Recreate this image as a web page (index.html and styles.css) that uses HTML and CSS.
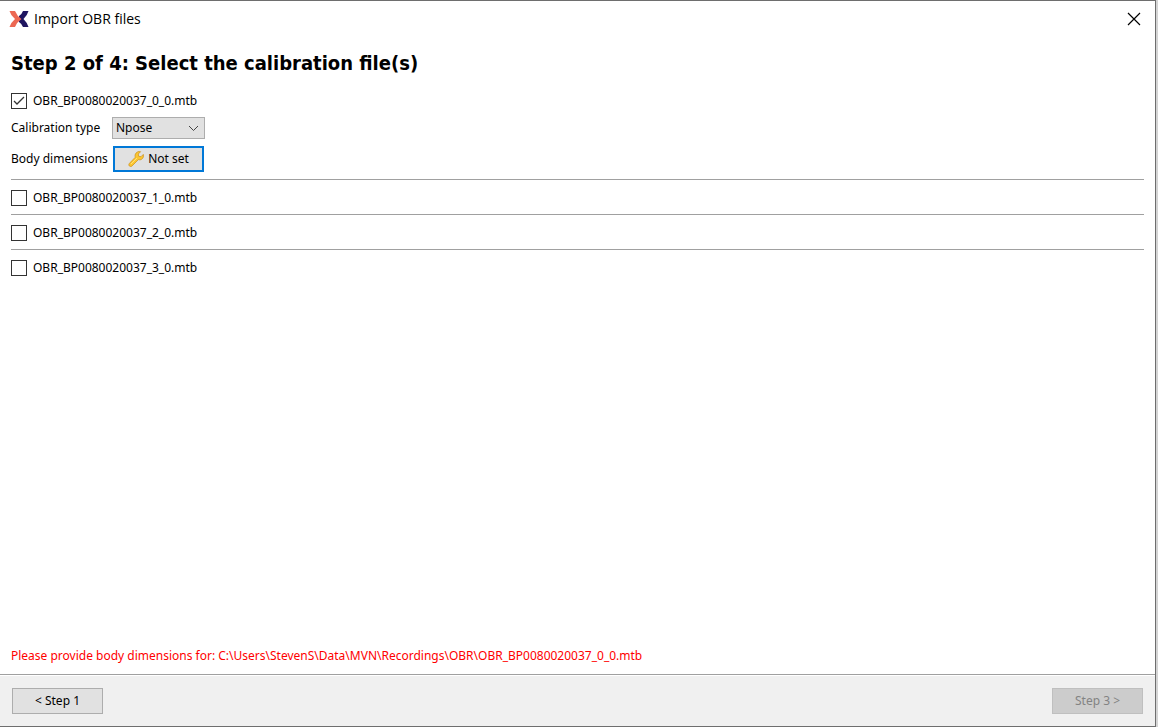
FILE: index.html
```html
<!DOCTYPE html>
<html lang="en">
<head>
    <meta charset="UTF-8">
    <meta name="viewport" content="width=device-width, initial-scale=1.0">
    <title>Import OBR files</title>
    <link rel="stylesheet" href="styles.css">
</head>
<body>
    <div class="dialog">
        <header class="titlebar">
            <svg class="logo" width="20" height="18" viewBox="0 0 20 18" aria-hidden="true">
                <path fill="#1f1560" d="M14 1h5.500q-1 4-5 8q4 4 5 8H14q-1-3-4-5V6q3-2 4-5z"/>
                <path fill="#ec6853" d="M.5 1H6q2 5 6.500 8q-4.500 3-6.500 8H.5q1-4 5.500-8Q1.500 5 .5 1z"/>
            </svg>
            <span class="title">Import OBR files</span>
            <button type="button" class="close" aria-label="Close">
                <svg width="14" height="14" viewBox="0 0 14 14" aria-hidden="true">
                    <path fill="none" stroke="#000" stroke-width="1.2" d="M1 1l12 12M13 1L1 13"/>
                </svg>
            </button>
        </header>

        <main class="content">
            <h1>Step 2 of 4: Select the calibration file(s)</h1>

            <div class="file">
                <div class="check-row">
                    <input type="checkbox" id="file-0" checked>
                    <label for="file-0">OBR_BP0080020037_0_0.mtb</label>
                </div>
                <div class="options">
                    <label for="calibration-type">Calibration type</label>
                    <div class="select">
                        <select id="calibration-type">
                            <option>Npose</option>
                            <option>Tpose</option>
                        </select>
                        <svg class="arrow" width="11" height="7" viewBox="0 0 11 7" aria-hidden="true">
                            <path fill="none" stroke="#444" d="M1 1l4.500 4.500L10 1"/>
                        </svg>
                    </div>
                    <label for="body-dimensions">Body dimensions</label>
                    <button type="button" id="body-dimensions" class="button focused">
                        <svg width="16" height="16" viewBox="0 0 16 16" aria-hidden="true">
                            <path fill="#fcc62f" stroke="#c98e1c" stroke-width=".7" stroke-linejoin="round" d="M12.600 .7L10.300 3l.4 2.300 2.300.4 2.300-2.300c.5 2.200-.2 4-1.700 4.900-1.100.7-2.300.6-3.200.3L4.100 14.900c-.8.8-2 .8-2.700.1-.8-.8-.7-1.900.1-2.700L7.300 6.200C6.800 5 7 3.300 8 2.100 9.200.7 11 .2 12.600.7z"/>
                            <path fill="none" stroke="#ffe078" d="M3 13l6-6"/>
                        </svg>
                        Not set
                    </button>
                </div>
            </div>
            <div class="file">
                <div class="check-row">
                    <input type="checkbox" id="file-1">
                    <label for="file-1">OBR_BP0080020037_1_0.mtb</label>
                </div>
            </div>
            <div class="file">
                <div class="check-row">
                    <input type="checkbox" id="file-2">
                    <label for="file-2">OBR_BP0080020037_2_0.mtb</label>
                </div>
            </div>
            <div class="file">
                <div class="check-row">
                    <input type="checkbox" id="file-3">
                    <label for="file-3">OBR_BP0080020037_3_0.mtb</label>
                </div>
            </div>

            <p class="error">Please provide body dimensions for: C:\Users\StevenS\Data\MVN\Recordings\OBR\OBR_BP0080020037_0_0.mtb</p>
        </main>

        <footer>
            <button type="button" class="button">&lt; Step 1</button>
            <button type="button" class="button" disabled>Step 3 &gt;</button>
        </footer>
    </div>
</body>
</html>
```

FILE: styles.css
```css
* {
    box-sizing: border-box;
}

body {
    margin: 0;
    padding-right: 2px;
    background-color: #d4d4d4;
    color: #000;
    font-family: "Noto Sans", sans-serif;
    font-size: 12px;
    line-height: 16px;
}

.dialog {
    display: flex;
    flex-direction: column;
    min-height: 100vh;
    background-color: #fff;
    border: 1px solid #6e6e6e;
    border-left: none;
}

.titlebar {
    display: flex;
    align-items: center;
    height: 36px;
    padding: 0 14px 0 9px;
    gap: 5px;
}

.title {
    flex: 1;
    font-family: "Open Sans", sans-serif;
    font-size: 14px;
}

.close {
    display: flex;
    padding: 0;
    border: none;
    background: none;
}

.content {
    display: flex;
    flex-direction: column;
    flex: 1;
    padding: 12px 11px 10px;
}

h1 {
    margin: 0 0 11px;
    font-family: "DejaVu Sans Condensed", "DejaVu Sans", sans-serif;
    font-size: 20px;
    line-height: 28px;
}

.file {
    padding: 5px 0 7px;
}

.file + .file {
    padding: 10px 0 8px;
    border-top: 1px solid #a0a0a0;
}

.check-row {
    display: flex;
    align-items: center;
    gap: 6px;
}

input[type="checkbox"] {
    appearance: none;
    width: 16px;
    height: 16px;
    margin: 0;
    border: 1px solid #333;
    background-color: #fff;
}

input[type="checkbox"]:checked {
    background-image: url("data:image/svg+xml,%3Csvg xmlns='http://www.w3.org/2000/svg' viewBox='0 0 14 14'%3E%3Cpath fill='none' stroke='%23333' stroke-width='1.3' d='M2 7l3 3 7-7'/%3E%3C/svg%3E");
}

.options {
    display: grid;
    grid-template-columns: 95px 93px;
    align-items: center;
    gap: 7px 6px;
    margin-top: 8px;
    white-space: nowrap;
}

.select {
    display: grid;
    align-items: center;
}

.select select,
.select .arrow {
    grid-area: 1 / 1;
}

.select .arrow {
    justify-self: end;
    margin-right: 6px;
    pointer-events: none;
}

select {
    appearance: none;
    height: 22px;
    padding: 0 3px;
    border: 1px solid #adadad;
    border-radius: 0;
    background-color: #e1e1e1;
    color: #000;
    font: inherit;
}

.button {
    display: flex;
    align-items: center;
    justify-content: center;
    gap: 4px;
    width: 91px;
    height: 26px;
    padding: 0;
    border: 1px solid #adadad;
    background-color: #e1e1e1;
    color: #000;
    font: inherit;
}

.button:disabled {
    border-color: #bfbfbf;
    background-color: #ccc;
    color: #838383;
}

.options .button {
    justify-self: center;
}

.focused {
    border: 2px solid #0078d7;
}

.error {
    margin: auto 0 0;
    color: #f00;
}

footer {
    display: flex;
    justify-content: space-between;
    padding: 13px 12px 12px;
    border-top: 1px solid #a0a0a0;
    background-color: #f0f0f0;
    box-shadow: inset 0 1px #fff;
}
```
